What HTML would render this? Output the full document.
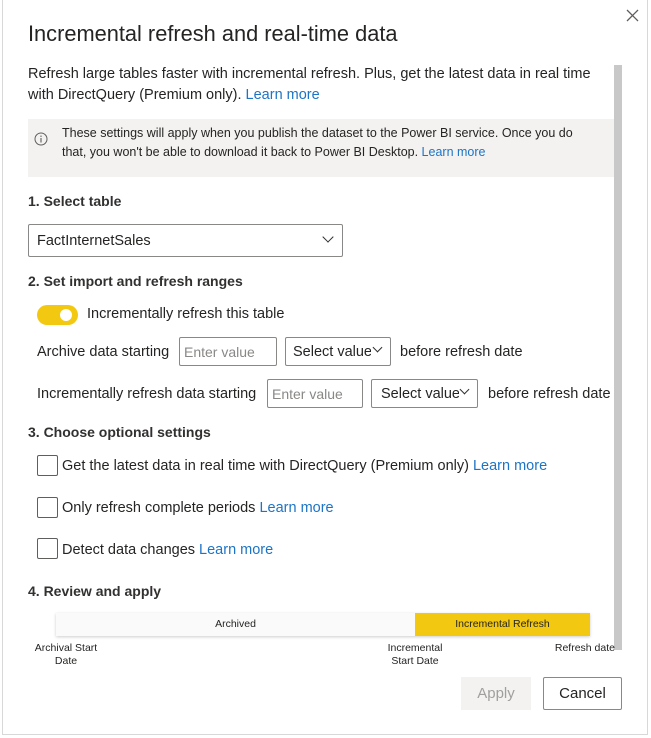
<!DOCTYPE html>
<html><head><meta charset="utf-8"><style>
*{margin:0;padding:0;box-sizing:border-box}
body{width:651px;height:738px;background:#fff;font-family:"Liberation Sans",sans-serif;color:#252423;position:relative;overflow:hidden}
.a{position:absolute;white-space:nowrap;line-height:1}
.dlg{position:absolute;left:2px;top:-2px;width:646px;height:737px;border:1px solid #d8d8d8}
.t{font-size:14.5px}
.h{font-size:14px;font-weight:bold;color:#323130}
.lk{color:#1d74c6}
.box{position:absolute;border:1px solid #8a8886;background:#fff;border-radius:2px}
.ph{color:#8a8886;font-size:14px}
.cb{position:absolute;left:37px;width:21px;height:21px;border:1px solid #605e5c;border-radius:2px;background:#fff}
.chev{position:absolute;width:8px;height:8px;border-right:1.2px solid #323130;border-bottom:1.2px solid #323130;transform:rotate(45deg)}
.sm{font-size:10.5px;color:#252423;text-align:center;line-height:13px}
.sel{overflow:hidden;width:78px}
</style></head><body>
<div class="dlg"></div>
<svg class="a" style="left:626px;top:9px" width="13" height="13"><path d="M1 1L12 12M12 1L1 12" stroke="#605e5c" stroke-width="1.3"/></svg>
<div class="a" style="left:28px;top:23px;font-size:21.8px;color:#252423">Incremental refresh and real-time data</div>
<div style="position:absolute;left:614px;top:65px;width:8px;height:585px;background:#c8c8c8"></div>
<div class="a t" style="left:28px;top:67px">Refresh large tables faster with incremental refresh. Plus, get the latest data in real time</div>
<div class="a t" style="left:28px;top:88px">with DirectQuery (Premium only). <span class="lk">Learn more</span></div>
<div style="position:absolute;left:28px;top:119px;width:586px;height:58px;background:#f3f2f1"></div>
<svg class="a" style="left:34px;top:132px" width="14" height="14"><circle cx="7" cy="7" r="6" fill="none" stroke="#605e5c" stroke-width="1"/><path d="M7 6v4.5" stroke="#605e5c" stroke-width="1.1"/><circle cx="7" cy="4.2" r=".7" fill="#605e5c"/></svg>
<div class="a" style="left:62px;top:127px;font-size:12.5px">These settings will apply when you publish the dataset to the Power BI service. Once you do</div>
<div class="a" style="left:62px;top:146px;font-size:12.5px">that, you won't be able to download it back to Power BI Desktop. <span class="lk">Learn more</span></div>
<div class="a h" style="left:28px;top:194px">1. Select table</div>
<div class="box" style="left:28px;top:224px;width:315px;height:33px"></div>
<div class="a t" style="left:37px;top:234px">FactInternetSales</div>
<div class="chev" style="left:324px;top:233px"></div>
<div class="a h" style="left:28px;top:274px">2. Set import and refresh ranges</div>
<div style="position:absolute;left:37px;top:305px;width:41px;height:20px;border-radius:10px;background:#f2c811"></div>
<div style="position:absolute;left:60px;top:309px;width:12px;height:12px;border-radius:6px;background:#fff"></div>
<div class="a t" style="left:87px;top:307px">Incrementally refresh this table</div>
<div class="a t" style="left:37px;top:345px">Archive data starting</div>
<div class="box" style="left:179px;top:337px;width:98px;height:29px"></div>
<div class="a ph" style="left:184px;top:345px">Enter value</div>
<div class="box" style="left:285px;top:337px;width:106px;height:29px"></div>
<div class="a t sel" style="left:293px;top:345px">Select value</div>
<div class="chev" style="left:374px;top:344px;width:7px;height:7px"></div>
<div class="a t" style="left:400px;top:345px">before refresh date</div>
<div class="a t" style="left:37px;top:387px">Incrementally refresh data starting</div>
<div class="box" style="left:267px;top:379px;width:96px;height:29px"></div>
<div class="a ph" style="left:272px;top:387px">Enter value</div>
<div class="box" style="left:371px;top:379px;width:107px;height:29px"></div>
<div class="a t sel" style="left:381px;top:387px">Select value</div>
<div class="chev" style="left:461px;top:386px;width:7px;height:7px"></div>
<div class="a t" style="left:488px;top:387px">before refresh date</div>
<div class="a h" style="left:28px;top:425px">3. Choose optional settings</div>
<div class="cb" style="top:455px"></div>
<div class="a t" style="left:62px;top:459px">Get the latest data in real time with DirectQuery (Premium only) <span class="lk">Learn more</span></div>
<div class="cb" style="top:497px"></div>
<div class="a t" style="left:62px;top:501px">Only refresh complete periods <span class="lk">Learn more</span></div>
<div class="cb" style="top:538px"></div>
<div class="a t" style="left:62px;top:543px">Detect data changes <span class="lk">Learn more</span></div>
<div class="a h" style="left:28px;top:584px">4. Review and apply</div>
<div style="position:absolute;left:56px;top:613px;width:534px;height:23px;background:#fafafa;box-shadow:0 1px 3px rgba(0,0,0,.2)"></div>
<div style="position:absolute;left:415px;top:613px;width:175px;height:23px;background:#f2c811"></div>
<div class="a" style="left:56px;top:619px;width:359px;text-align:center;font-size:10.5px">Archived</div>
<div class="a" style="left:415px;top:619px;width:175px;text-align:center;font-size:10.5px">Incremental Refresh</div>
<div class="a sm" style="left:26px;top:642px;width:80px">Archival Start<br>Date</div>
<div class="a sm" style="left:375px;top:642px;width:80px">Incremental<br>Start Date</div>
<div class="a sm" style="left:543px;top:642px;width:72px;text-align:right">Refresh date</div>
<div style="position:absolute;left:461px;top:677px;width:70px;height:33px;background:#f3f2f1;color:#a19f9d;font-size:15px;text-align:center;line-height:33px">Apply</div>
<div style="position:absolute;left:543px;top:677px;width:79px;height:33px;border:1px solid #8a8886;border-radius:2px;color:#252423;font-size:15px;text-align:center;line-height:31px">Cancel</div>
</body></html>
